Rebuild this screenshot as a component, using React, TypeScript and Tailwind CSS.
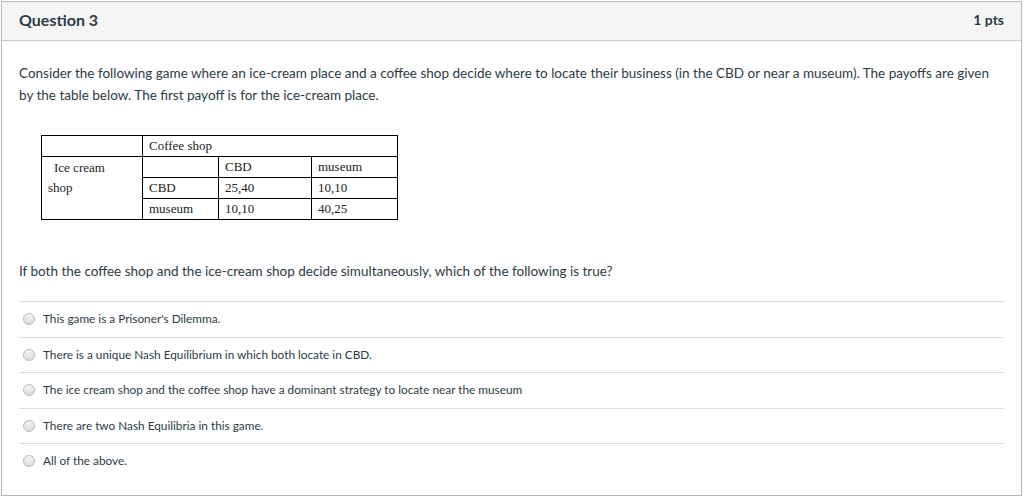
export default function App() {
    const answers = [
        "This game is a Prisoner's Dilemma.",
        "There is a unique Nash Equilibrium in which both locate in CBD.",
        "The ice cream shop and the coffee shop have a dominant strategy to locate near the museum",
        "There are two Nash Equilibria in this game.",
        "All of the above.",
    ];

    return (
        <div className="w-[1024px] h-[497px] bg-white pt-px pl-px font-['Lato','Liberation_Sans',sans-serif] text-[#2d3b45]">
            <div className="w-[1021px] h-[495px] border border-[#b5b5b5] flex flex-col">
                {/* ヘッダー */}
                <div className="h-[39px] bg-[#f5f5f5] border-b border-[#c7cdd1] flex items-center justify-between pl-[17px] pr-[17px] pb-[3px]">
                    <h2 className="text-[16px] font-bold">Question 3</h2>
                    <span className="text-[14px] font-bold">1 pts</span>
                </div>

                <div className="pl-[17px] pr-[17px] pt-[21px]">
                    <p className="text-[13.5px] leading-[22px]">
                        Consider the following game where an ice-cream place and a coffee shop decide where to locate their business (in the CBD or near a museum). The payoffs are given by the table below. The first payoff is for the ice-cream place.
                    </p>

                    {/* 利得表 */}
                    <table className="mt-[29px] ml-[22px] border-collapse font-['Liberation_Serif',serif] text-[13px] text-[#222]">
                        <tbody>
                            <tr className="h-[21px]">
                                <td className="w-[101px] border border-black"></td>
                                <td colSpan={3} className="border border-black pl-[6px] align-middle">Coffee shop</td>
                            </tr>
                            <tr className="h-[21px]">
                                <td rowSpan={3} className="border border-black pl-[6px] align-top pt-[1px] leading-[20px]">
                                    <span className="pl-[6px]">Ice cream</span>
                                    <br />
                                    shop
                                </td>
                                <td className="w-[76px] border border-black"></td>
                                <td className="w-[93px] border border-black pl-[6px]">CBD</td>
                                <td className="w-[86px] border border-black pl-[6px]">museum</td>
                            </tr>
                            <tr className="h-[21px]">
                                <td className="border border-black pl-[6px]">CBD</td>
                                <td className="border border-black pl-[6px]">25,40</td>
                                <td className="border border-black pl-[6px]">10,10</td>
                            </tr>
                            <tr className="h-[21px]">
                                <td className="border border-black pl-[6px]">museum</td>
                                <td className="border border-black pl-[6px]">10,10</td>
                                <td className="border border-black pl-[6px]">40,25</td>
                            </tr>
                        </tbody>
                    </table>

                    <p className="mt-[40px] text-[13.5px] leading-[22px]">
                        If both the coffee shop and the ice-cream shop decide simultaneously, which of the following is true?
                    </p>

                    {/* 選択肢 */}
                    <div className="mt-[19px]">
                        {answers.map((a) => (
                            <div key={a} className="h-[35.5px] border-t border-[#dddddd] flex items-center pl-[4px] text-[11.8px]">
                                <span className="w-[12px] h-[12px] rounded-full border border-[#b8b8b8] bg-gradient-to-b from-[#f4f4f4] to-[#dcdcdc] mr-[8px]"></span>
                                <span>{a}</span>
                            </div>
                        ))}
                    </div>
                </div>
            </div>
        </div>
    );
}
